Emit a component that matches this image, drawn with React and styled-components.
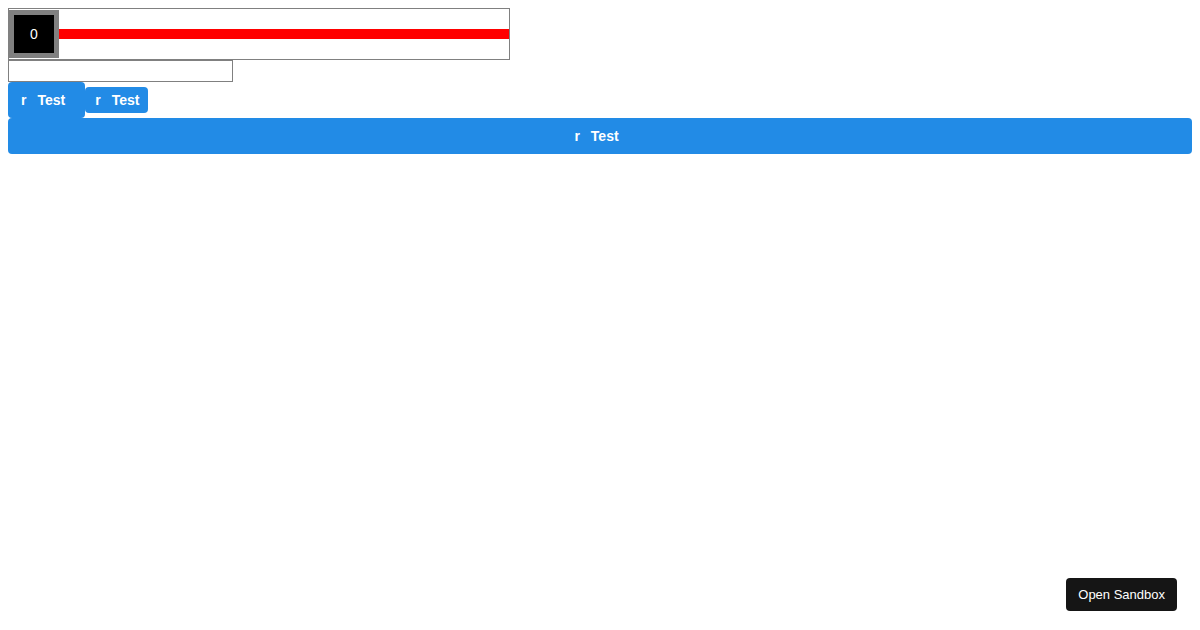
import React from 'react';
import styled, { createGlobalStyle } from 'styled-components';

const GlobalStyle = createGlobalStyle`
  body {
    margin: 8px;
    font-family: "Liberation Sans", Arial, sans-serif;
    background: #fff;
  }
`;

const Slider = styled.div`
  display: flex;
  align-items: center;
  width: 502px;
  height: 52px;
  box-sizing: border-box;
  border: 1px solid #808080;
`;

const Thumb = styled.div`
  display: flex;
  align-items: center;
  justify-content: center;
  width: 50px;
  height: 48px;
  box-sizing: border-box;
  border: 5px solid #808080;
  background: #000;
  color: #fff;
  font-size: 14px;
  flex-shrink: 0;
`;

const Track = styled.div`
  flex: 1;
  height: 10px;
  background: #ff0000;
`;

const Field = styled.input`
  display: block;
  width: 225px;
  height: 22px;
  box-sizing: border-box;
  border: 1px solid #808080;
  margin: 0;
  padding: 0 4px;
`;

const Row = styled.div`
  display: flex;
  align-items: center;
`;

const Button = styled.button`
  display: flex;
  align-items: center;
  justify-content: center;
  gap: 11px;
  box-sizing: border-box;
  height: ${p => (p.$small ? '26px' : '36px')};
  width: ${p => (p.$full ? '100%' : 'auto')};
  padding: ${p => (p.$small ? '0 9px 0 10px' : '0 20px 0 13px')};
  margin: 0;
  border: none;
  border-radius: 4px;
  background: #228be6;
  color: #fff;
  font-family: "Liberation Sans", Arial, sans-serif;
  font-size: 14px;
  font-weight: 700;
  cursor: pointer;
`;

const SandboxButton = styled.button`
  position: fixed;
  right: 23px;
  bottom: 19px;
  height: 33px;
  padding: 0 12px;
  border: none;
  border-radius: 4px;
  background: #151515;
  color: #fff;
  font-family: "Liberation Sans", Arial, sans-serif;
  font-size: 13px;
  cursor: pointer;
`;

const TestButton = props => (
  <Button {...props}>
    <span>r</span>
    <span>Test</span>
  </Button>
);

export default function App() {
  return (
    <>
      <GlobalStyle />
      <Slider>
        <Thumb>0</Thumb>
        <Track />
      </Slider>
      <Field type="text" />
      <Row>
        <TestButton />
        <TestButton $small />
      </Row>
      <TestButton $full />
      <SandboxButton>Open Sandbox</SandboxButton>
    </>
  );
}
